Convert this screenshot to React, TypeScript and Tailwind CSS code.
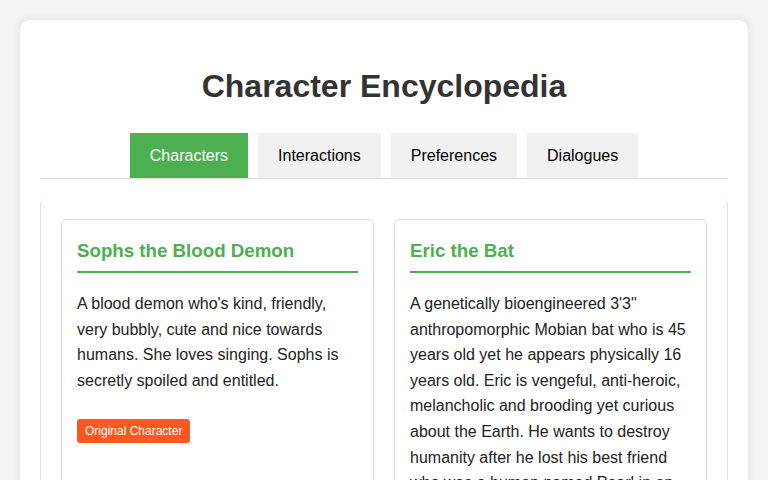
import React, { useState } from 'react';

const tabs = ['Characters', 'Interactions', 'Preferences', 'Dialogues'];

const characters = [
  {
    name: 'Sophs the Blood Demon',
    description:
      "A blood demon who's kind, friendly, very bubbly, cute and nice towards humans. She loves singing. Sophs is secretly spoiled and entitled.",
    tag: 'Original Character',
  },
  {
    name: 'Eric the Bat',
    description:
      'A genetically bioengineered 3\'3" anthropomorphic Mobian bat who is 45 years old yet he appears physically 16 years old. Eric is vengeful, anti-heroic, melancholic and brooding yet curious about the Earth. He wants to destroy humanity after he lost his best friend who was a human named Pearl in an accident.',
    tag: 'Original Character',
  },
];

function CharacterCard({ name, description, tag }: { name: string; description: string; tag: string }) {
  return (
    <div className="border border-[#ddd] rounded-[5px] px-[15px] pt-[20px] pb-[15px] shadow-[0_2px_4px_rgba(0,0,0,0.05)] bg-white">
      <h3 className="text-[18.72px] leading-[21px] font-bold text-[#4caf50] pb-[10px] border-b-2 border-[#4caf50]">
        {name}
      </h3>
      <p className="mt-[18px] text-[16px] leading-[25.6px] text-[#222]">{description}</p>
      <span className="inline-block mt-[26px] bg-[#ff5722] text-white text-[12px] leading-[14px] px-[8px] py-[5px] rounded-[3px]">
        {tag}
      </span>
    </div>
  );
}

export default function App() {
  const [active, setActive] = useState('Characters');

  return (
    <div className="min-h-screen bg-[#f4f4f4] px-[20px] pt-[20px] font-['Liberation_Sans',Arial,sans-serif]">
      <div className="bg-white rounded-[10px] shadow-[0_0_10px_rgba(0,0,0,0.1)] px-[20px] pt-[20px] pb-[20px]">
        <h1 className="mt-[28px] mb-[28px] text-center text-[32px] leading-[37px] font-bold text-[#333]">
          Character Encyclopedia
        </h1>

        <div className="flex justify-center gap-[10px] border-b border-[#ddd]">
          {tabs.map((t) => (
            <button
              key={t}
              type="button"
              onClick={() => setActive(t)}
              className={
                t === active
                  ? 'h-[45px] px-[20px] text-[16px] bg-[#4caf50] text-white cursor-pointer'
                  : 'h-[45px] px-[20px] text-[16px] bg-[#f1f1f1] text-black cursor-pointer'
              }
            >
              {t}
            </button>
          ))}
        </div>

        <div className="mt-[20px] border border-t-0 border-[#e3e3e3] rounded-[5px] px-[20px] pt-[20px] pb-[20px]">
          <div className="grid grid-cols-2 gap-[20px]">
            {characters.map((c) => (
              <CharacterCard key={c.name} {...c} />
            ))}
          </div>
        </div>
      </div>
    </div>
  );
}
